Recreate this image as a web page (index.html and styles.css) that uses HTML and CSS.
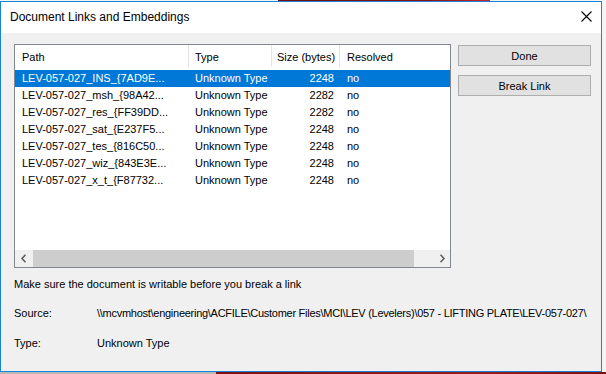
FILE: index.html
```html
<!DOCTYPE html>
<html lang="en">
<head>
    <meta charset="UTF-8">
    <title>Document Links and Embeddings</title>
    <link rel="stylesheet" href="styles.css">
</head>
<body>

<!-- Dialog window -->
<div class="window">
    <div class="titlebar">
        <span class="title">Document Links and Embeddings</span>
        <svg class="close" width="11" height="11" viewBox="0 0 11 11">
            <path d="M0.5 0.5 L10.5 10.5 M10.5 0.5 L0.5 10.5" stroke="#000" stroke-width="1.1" fill="none"/>
        </svg>
    </div>

    <div class="content">
        <div class="top-row">
            <!-- Links list -->
            <div class="list">
                <div class="list-header">
                    <div class="col col-path">Path</div>
                    <div class="col col-type">Type</div>
                    <div class="col col-size">Size (bytes)</div>
                    <div class="col col-res">Resolved</div>
                </div>
                <div class="list-body">
                    <div class="row selected">
                        <div class="col col-path">LEV-057-027_INS_{7AD9E...</div>
                        <div class="col col-type">Unknown Type</div>
                        <div class="col col-size">2248</div>
                        <div class="col col-res">no</div>
                    </div>
                    <div class="row">
                        <div class="col col-path">LEV-057-027_msh_{98A42...</div>
                        <div class="col col-type">Unknown Type</div>
                        <div class="col col-size">2282</div>
                        <div class="col col-res">no</div>
                    </div>
                    <div class="row">
                        <div class="col col-path">LEV-057-027_res_{FF39DD...</div>
                        <div class="col col-type">Unknown Type</div>
                        <div class="col col-size">2282</div>
                        <div class="col col-res">no</div>
                    </div>
                    <div class="row">
                        <div class="col col-path">LEV-057-027_sat_{E237F5...</div>
                        <div class="col col-type">Unknown Type</div>
                        <div class="col col-size">2248</div>
                        <div class="col col-res">no</div>
                    </div>
                    <div class="row">
                        <div class="col col-path">LEV-057-027_tes_{816C50...</div>
                        <div class="col col-type">Unknown Type</div>
                        <div class="col col-size">2248</div>
                        <div class="col col-res">no</div>
                    </div>
                    <div class="row">
                        <div class="col col-path">LEV-057-027_wiz_{843E3E...</div>
                        <div class="col col-type">Unknown Type</div>
                        <div class="col col-size">2248</div>
                        <div class="col col-res">no</div>
                    </div>
                    <div class="row">
                        <div class="col col-path">LEV-057-027_x_t_{F87732...</div>
                        <div class="col col-type">Unknown Type</div>
                        <div class="col col-size">2248</div>
                        <div class="col col-res">no</div>
                    </div>
                </div>
                <!-- Horizontal scrollbar -->
                <div class="hscroll">
                    <div class="arrow">
                        <svg width="8" height="9" viewBox="0 0 8 9"><path d="M5.5 0.8 L2 4.5 L5.5 8.2" stroke="#606060" stroke-width="1.6" fill="none"/></svg>
                    </div>
                    <div class="track"><div class="thumb"></div></div>
                    <div class="arrow">
                        <svg width="8" height="9" viewBox="0 0 8 9"><path d="M2.5 0.8 L6 4.5 L2.5 8.2" stroke="#606060" stroke-width="1.6" fill="none"/></svg>
                    </div>
                </div>
            </div>

            <!-- Buttons -->
            <div class="buttons">
                <button>Done</button>
                <button>Break Link</button>
            </div>
        </div>

        <p class="note">Make sure the document is writable before you break a link</p>

        <div class="info">
            <span class="label">Source:</span>
            <span class="value value-path">\\mcvmhost\engineering\ACFILE\Customer Files\MCI\LEV (Levelers)\057 - LIFTING PLATE\LEV-057-027\</span>
        </div>
        <div class="info info-type">
            <span class="label">Type:</span>
            <span class="value">Unknown Type</span>
        </div>
    </div>
</div>

</body>
</html>
```

FILE: styles.css
```css
body {
    margin: 0;
    padding: 0;
    font-family: "Liberation Sans", Arial, sans-serif;
    font-size: 11px;
    color: #000;
    background:
        linear-gradient(to right, #6e0d0d, #8a1414 70%, #c8282e) 278px 0 / 212px 1px no-repeat,
        linear-gradient(to right, #b8b8b8 216px, #7c1111 216px, #9a1a1a 80%, #7c1111) 0 372px / 100% 3px no-repeat,
        #f4f4f4;
    height: 374px;
    overflow: hidden;
}

.window {
    margin-top: 1px;
    width: 600px;
    height: 369px;
    border: 1px solid #1883d7;
    background-color: #f0f0f0;
    display: flex;
    flex-direction: column;
}

.titlebar {
    height: 31px;
    background-color: #fff;
    display: flex;
    align-items: center;
    justify-content: space-between;
    padding: 0 9px 0 9px;
    flex-shrink: 0;
}

.title {
    font-size: 12px;
    margin-top: -1px;
}

.close {
    margin-top: -2px;
}

.content {
    padding: 11px 0 0 13px;
}

.top-row {
    display: flex;
    gap: 7px;
}

.list {
    width: 435px;
    height: 222px;
    border: 1px solid #828790;
    background-color: #fff;
    display: flex;
    flex-direction: column;
}

.list-header {
    display: flex;
    height: 25px;
    flex-shrink: 0;
}

.list-header .col {
    height: 22px;
    line-height: 25px;
    border-right: 1px solid #e5e5e5;
}

.list-header .col-res {
    border-right: none;
}

.list-body {
    flex: 1;
}

.row {
    display: flex;
    height: 17px;
    line-height: 17px;
}

.row.selected {
    background-color: #0078d7;
    color: #fff;
}

.col {
    white-space: nowrap;
    overflow: hidden;
    box-sizing: border-box;
}

.col-path {
    width: 174px;
    padding-left: 7px;
}

.col-type {
    width: 83px;
    padding-left: 6px;
}

.col-size {
    width: 68px;
    padding-right: 6px;
    text-align: right;
}

.list-header .col-size {
    text-align: left;
    padding-left: 5px;
}

.col-res {
    flex: 1;
    padding-left: 7px;
}

.hscroll {
    height: 17px;
    display: flex;
    background-color: #f0f0f0;
    flex-shrink: 0;
}

.arrow {
    width: 17px;
    display: flex;
    align-items: center;
    justify-content: center;
}

.track {
    flex: 1;
    padding-left: 1px;
    padding-right: 19px;
}

.thumb {
    height: 17px;
    background-color: #cdcdcd;
}

.buttons {
    display: flex;
    flex-direction: column;
    gap: 9px;
    padding-top: 1px;
}

button {
    width: 133px;
    height: 21px;
    padding: 0;
    font-family: "Liberation Sans", Arial, sans-serif;
    font-size: 11px;
    color: #000;
    background-color: #e1e1e1;
    border: 1px solid #adadad;
}

.note {
    margin: 9px 0 0 0;
    line-height: 15px;
}

.info {
    display: flex;
    line-height: 15px;
    margin-top: 14px;
}

.info-type {
    margin-top: 15px;
}

.label {
    width: 83px;
    flex-shrink: 0;
}

.value {
    white-space: nowrap;
}

.value-path {
    letter-spacing: -0.27px;
}
```
